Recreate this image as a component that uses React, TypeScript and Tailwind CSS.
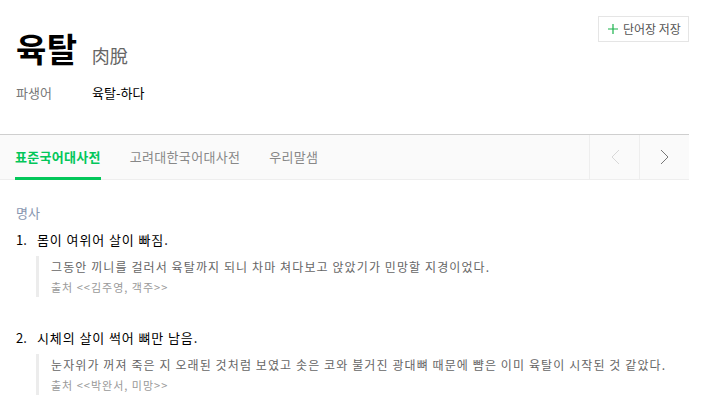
import React from "react";

const font = { fontFamily: '"Noto Sans CJK KR", "Noto Sans", sans-serif' };

const senses = [
  {
    no: "1.",
    def: "몸이 여위어 살이 빠짐.",
    ex: "그동안 끼니를 걸러서 육탈까지 되니 차마 쳐다보고 앉았기가 민망할 지경이었다.",
    src: "출처 <<김주영, 객주>>",
  },
  {
    no: "2.",
    def: "시체의 살이 썩어 뼈만 남음.",
    ex: "눈자위가 꺼져 죽은 지 오래된 것처럼 보였고 솟은 코와 불거진 광대뼈 때문에 뺨은 이미 육탈이 시작된 것 같았다.",
    src: "출처 <<박완서, 미망>>",
  },
];

export default function App() {
  return (
    <div className="w-[689px] bg-white text-black" style={font}>
      <div className="relative px-4 pt-[26px] h-[134px]">
        <div className="flex items-end gap-[14px]">
          <h1 className="text-[33px] font-bold leading-[44px] tracking-[0.5px]">육탈</h1>
          <span className="text-[18px] text-[#666] leading-[30px]">肉脫</span>
        </div>
        <div className="flex mt-[14px] text-[13px] leading-[18px]">
          <span className="w-[76px] text-[#777]">파생어</span>
          <span>육탈-하다</span>
        </div>
        <button className="absolute right-0 top-4 h-[26px] w-[91px] border border-[#e5e5e5] bg-white flex items-center pl-[9px] gap-[5px] text-[12px] text-[#555]">
          <svg width="10" height="10" viewBox="0 0 10 10" stroke="#19b24b" strokeWidth="1.2">
            <path d="M5 0 V10 M0 5 H10" />
          </svg>
          단어장 저장
        </button>
      </div>

      <div className="flex h-[46px] border-t border-[#cfcfcf] border-b border-b-[#eeeeee] bg-[#fafafa]">
        <div className="flex flex-1 pl-[15px] gap-[29px] text-[13px] tracking-[0.3px]">
          <div className="relative flex items-center font-bold text-[#03c75a]">
            표준국어대사전
            <span className="absolute left-0 right-0 -bottom-px h-[3px] bg-[#03c75a]" />
          </div>
          <div className="flex items-center text-[#888]">고려대한국어대사전</div>
          <div className="flex items-center text-[#888]">우리말샘</div>
        </div>
        <div className="w-[50px] border-l border-[#eeeeee] flex items-center justify-center">
          <svg width="10" height="16" viewBox="0 0 10 16" fill="none" stroke="#d8d8d8" strokeWidth="1">
            <path d="M9 1 L2 8 L9 15" />
          </svg>
        </div>
        <div className="w-[50px] border-l border-[#eeeeee] flex items-center justify-center">
          <svg width="10" height="16" viewBox="0 0 10 16" fill="none" stroke="#777" strokeWidth="1">
            <path d="M1 1 L8 8 L1 15" />
          </svg>
        </div>
      </div>

      <div className="px-4 pt-[24px]">
        <div className="text-[13px] text-[#8796b0] leading-[18px]">명사</div>
        <div className="flex flex-col gap-[32px] mt-[9px]">
          {senses.map((s) => (
            <div key={s.no}>
              <div className="flex text-[13px] leading-[18px]">
                <span className="w-[21px]">{s.no}</span>
                <span className="tracking-[0.9px]">{s.def}</span>
              </div>
              <div className="ml-[20px] mt-[7px] border-l-[3px] border-[#ececec] pl-[12px] py-[2px]">
                <div className="text-[12px] text-[#666] leading-[17px] tracking-[1.1px]">{s.ex}</div>
                <div className="text-[11px] text-[#999] leading-[16px] mt-[4px] tracking-[1px]">{s.src}</div>
              </div>
            </div>
          ))}
        </div>
      </div>
    </div>
  );
}
